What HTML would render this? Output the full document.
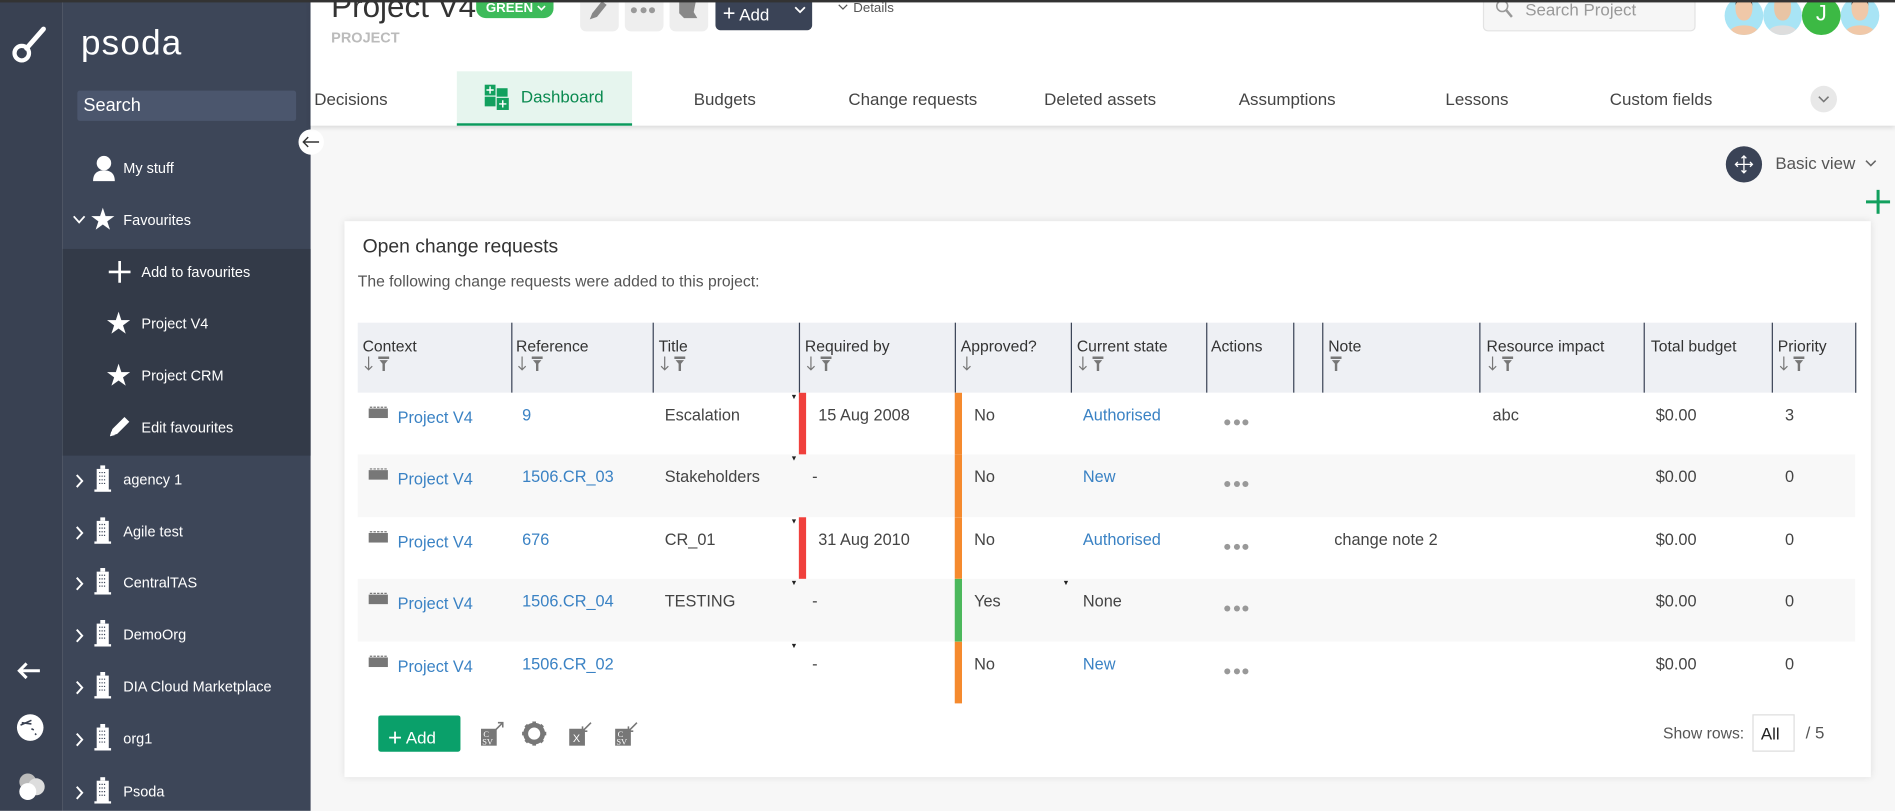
<!DOCTYPE html>
<html><head><meta charset="utf-8">
<style>
*{box-sizing:border-box;margin:0;padding:0}
html,body{width:1895px;height:810px;overflow:hidden;background:#f7f7f7;font-family:"Liberation Sans",sans-serif}
#w{position:absolute;left:0;top:0;width:1568px;height:671px;transform:scale(1.20855);transform-origin:0 0;background:#f7f7f7;overflow:hidden}
.a{position:absolute;white-space:nowrap}
.side{color:#fff;font-size:12px}
.tab{font-size:14px;color:#444;top:74px}
.th{font-size:13px;color:#333;top:279px}
.ar{top:294px;height:14px}
.td{font-size:13.5px;color:#444}
.bl{color:#3a82c4}
.vl{position:absolute;top:267px;height:58px;width:1px;background:#3a4356}
.dots{position:absolute;width:30px;height:5px;white-space:nowrap;line-height:0}
.dots i{display:inline-block;width:5px;height:5px;border-radius:50%;background:#999;margin-right:2.5px}
</style></head><body><div id="w">
<div class="a" style="left:0;top:0;width:1568px;height:2px;background:#333;z-index:5"></div>
<div class="a" style="left:0;top:0;width:52px;height:671px;background:#394152"></div>
<svg class="a" style="left:8px;top:20px" width="34" height="34" viewBox="0 0 34 34"><line x1="28" y1="4" x2="14" y2="20" stroke="#fff" stroke-width="4" stroke-linecap="round"/><circle cx="10" cy="24" r="6" fill="none" stroke="#fff" stroke-width="3.5"/></svg>
<svg class="a" style="left:14px;top:548px" width="20" height="14"><path d="M2 7H19M8 1L2 7l6 6" stroke="#fff" stroke-width="2.5" fill="none"/></svg>
<div class="a" style="left:14px;top:591px;width:22px;height:22px;border-radius:50%;background:#fff"></div>
<svg class="a" style="left:14px;top:591px" width="22" height="22"><path d="M3 9l9-4M4 7l8 1M12 12l2 1M15 16l1 1" stroke="#394152" stroke-width="1.3"/></svg>
<div class="a" style="left:16px;top:640px;width:14px;height:14px;border-radius:50%;background:#bbb"></div>
<div class="a" style="left:23px;top:644px;width:14px;height:14px;border-radius:50%;background:#ddd"></div>
<div class="a" style="left:16px;top:648px;width:14px;height:14px;border-radius:50%;background:#fff"></div>
<div class="a" style="left:52px;top:0;width:205px;height:671px;background:#3d4658"></div>
<div class="a" style="left:52px;top:206px;width:205px;height:171px;background:#333a48"></div>
<div class="a" style="left:67px;top:20px;font-size:29px;color:#fff;letter-spacing:1px;font-weight:300">psoda</div>
<div class="a" style="left:64px;top:75px;width:181px;height:25px;background:#4b566d;border-radius:2px;color:#fff;font-size:15px;padding:4px 5px">Search</div>
<div class="a" style="left:247px;top:107px;width:21px;height:21px;border-radius:50%;background:#fff"></div>
<svg class="a" style="left:250px;top:112px" width="15" height="11"><path d="M1 5.5H14M5 1.5L1 5.5l4 4" stroke="#333" stroke-width="1.2" fill="none"/></svg>
<svg class="a" style="left:76px;top:128px" width="20" height="22"><circle cx="10" cy="7" r="6" fill="#fff"/><path d="M1 22c0-7 4-9 9-9s9 2 9 9z" fill="#fff"/></svg>
<div class="a side" style="left:102px;top:132px">My stuff</div>
<svg class="a" style="left:60px;top:178px" width="11" height="8"><path d="M1 1l4.5 5L10 1" stroke="#fff" stroke-width="1.5" fill="none"/></svg>
<div class="a" style="left:74px;top:167px;color:#fff;font-size:25px">&#9733;</div>
<div class="a side" style="left:102px;top:175px">Favourites</div>
<svg class="a" style="left:89px;top:215px" width="20" height="20"><path d="M10 1v18M1 10h18" stroke="#fff" stroke-width="2.2"/></svg>
<div class="a side" style="left:117px;top:218px">Add to favourites</div>
<div class="a" style="left:87px;top:253px;color:#fff;font-size:25px">&#9733;</div>
<div class="a side" style="left:117px;top:261px">Project V4</div>
<div class="a" style="left:87px;top:296px;color:#fff;font-size:25px">&#9733;</div>
<div class="a side" style="left:117px;top:304px">Project CRM</div>
<svg class="a" style="left:88px;top:342px" width="22" height="22"><path d="M3 19l2-6L15 3l4 4L9 17z" fill="#fff"/><path d="M3 19l1-4 3 3z" fill="#fff"/></svg>
<div class="a side" style="left:117px;top:347px">Edit favourites</div>
<div id="orgs"></div>
<div class="a" style="left:257px;top:0;width:1311px;height:104px;background:#fff;box-shadow:0 2px 4px rgba(0,0,0,.12)"></div>
<div class="a" style="left:274px;top:-10px;font-size:26px;color:#333">Project V4</div>
<div class="a" style="left:394px;top:0;width:64px;height:15px;background:#3dbb5a;border-radius:0 0 8px 8px;color:#fff;font-size:11px;font-weight:bold;padding:1px 0 0 8px">GREEN</div>
<svg class="a" style="left:444px;top:4px" width="8" height="6"><path d="M1 1l3 3 3-3" stroke="#fff" stroke-width="1.4" fill="none"/></svg>
<div class="a" style="left:274px;top:24px;font-size:12px;font-weight:bold;color:#bbb">PROJECT</div>
<div class="a" style="left:480px;top:0;width:32px;height:26px;background:#eee;border-radius:0 0 5px 5px"></div>
<svg class="a" style="left:486px;top:0" width="20" height="18"><path d="M2 16l2-5 8-10 4 3-8 10z" fill="#888"/></svg>
<div class="a" style="left:517px;top:0;width:32px;height:26px;background:#eee;border-radius:0 0 5px 5px"></div>
<div class="dots" style="left:522px;top:6px"><i></i><i></i><i></i></div>
<div class="a" style="left:554px;top:0;width:32px;height:26px;background:#eee;border-radius:0 0 5px 5px"></div>
<svg class="a" style="left:560px;top:0" width="20" height="20"><path d="M2 0h14l-2 10 3 5H6l-4-4z" fill="#888"/></svg>
<div class="a" style="left:592px;top:0;width:80px;height:25px;background:#3a4356;border-radius:0 0 4px 4px;color:#fff;font-size:14px;padding:1px 0 0 6px"><b style="font-size:18px;font-weight:normal">+</b> Add</div>
<svg class="a" style="left:657px;top:5px" width="10" height="7"><path d="M1 1l4 4 4-4" stroke="#fff" stroke-width="1.5" fill="none"/></svg>
<svg class="a" style="left:693px;top:3px" width="9" height="6"><path d="M1 1l3.5 3.5L8 1" stroke="#555" stroke-width="1" fill="none"/></svg>
<div class="a" style="left:706px;top:1px;font-size:11px;color:#555">Details</div>
<div class="a" style="left:1227px;top:-2px;width:176px;height:28px;background:#f6f6f6;border:1px solid #e3e3e3;border-radius:4px;font-size:14px;color:#999;padding:1px 0 0 34px">Search Project</div>
<svg class="a" style="left:1237px;top:0" width="16" height="16"><circle cx="6" cy="5" r="4.5" stroke="#999" fill="none" stroke-width="1.3"/><path d="M9 8l5 6" stroke="#999" stroke-width="2"/></svg>
<div id="av"></div>
<div class="a tab" style="left:260px">Decisions</div>
<div class="a" style="left:378px;top:59px;width:145px;height:45px;background:#e6f5ee;border-bottom:2px solid #0a9a5c"></div>
<svg class="a" style="left:401px;top:70px" width="22" height="22"><rect x="0" y="0" width="9" height="9" fill="#12a05e"/><rect x="10" y="3" width="9" height="7" fill="#12a05e"/><rect x="0" y="10" width="9" height="8" fill="#12a05e"/><rect x="10" y="11" width="10" height="10" fill="#12a05e"/><path d="M4.5 1.5v6M1.5 4.5h6M15 13v6M12 16h6" stroke="#fff" stroke-width="1.2"/></svg>
<div class="a tab" style="left:431px;color:#0a8a50;top:72px">Dashboard</div>
<div class="a tab" style="left:574px">Budgets</div>
<div class="a tab" style="left:702px">Change requests</div>
<div class="a tab" style="left:864px">Deleted assets</div>
<div class="a tab" style="left:1025px">Assumptions</div>
<div class="a tab" style="left:1196px">Lessons</div>
<div class="a tab" style="left:1332px">Custom fields</div>
<div class="a" style="left:1498px;top:71px;width:22px;height:22px;border-radius:50%;background:#e8e8e8"></div>
<svg class="a" style="left:1504px;top:79px" width="10" height="7"><path d="M1 1l4 4 4-4" stroke="#777" stroke-width="1.3" fill="none"/></svg>
<div class="a" style="left:1428px;top:121px;width:30px;height:30px;border-radius:50%;background:#3a4356"></div>
<svg class="a" style="left:1435px;top:128px" width="16" height="16"><path d="M8 1v14M1 8h14M6 3l2-2 2 2M6 13l2 2 2-2M3 6L1 8l2 2M13 6l2 2-2 2" stroke="#fff" stroke-width="1.1" fill="none"/></svg>
<div class="a" style="left:1469px;top:127px;font-size:14px;color:#555">Basic view</div>
<svg class="a" style="left:1543px;top:132px" width="10" height="7"><path d="M1 1l4 4 4-4" stroke="#666" stroke-width="1.3" fill="none"/></svg>
<svg class="a" style="left:1544px;top:157px" width="20" height="20"><path d="M10 0v20M0 10h20" stroke="#12a05e" stroke-width="2.5"/></svg>
<div class="a" style="left:285px;top:183px;width:1263px;height:460px;background:#fff;box-shadow:0 0 6px rgba(0,0,0,.1)"></div>
<div class="a" style="left:300px;top:196px;font-size:16px;color:#333">Open change requests</div>
<div class="a" style="left:296px;top:225px;font-size:13px;color:#555">The following change requests were added to this project:</div>
<div class="a" style="left:296px;top:267px;width:1239px;height:58px;background:#eef0f4"></div>
<div id="tbl"></div>
<div class="a" style="left:313px;top:592px;width:68px;height:30px;background:#0aa06a;border-radius:2px;color:#fff;font-size:14px;padding:6px 0 0 8px"><b style="font-size:20px;font-weight:normal;position:relative;top:2px">+</b> Add</div>
<svg class="a" style="left:397px;top:596px" width="22" height="22"><rect x="1" y="7" width="13" height="14" fill="#777"/><text x="3" y="14" font-size="7" fill="#fff" font-family="Liberation Serif">C</text><text x="2" y="20" font-size="7" fill="#fff" font-family="Liberation Serif">SV</text><path d="M12 9l7-7M15 2h4v4" stroke="#777" stroke-width="1.3" fill="none"/></svg>
<svg class="a" style="left:431px;top:596px" width="22" height="22"><circle cx="11" cy="11" r="7" fill="none" stroke="#777" stroke-width="4"/><path d="M11 1v4M11 17v4M1 11h4M17 11h4M4 4l3 3M15 15l3 3M4 18l3-3M15 7l3-3" stroke="#777" stroke-width="3"/></svg>
<svg class="a" style="left:470px;top:596px" width="22" height="22"><rect x="1" y="7" width="13" height="14" fill="#777"/><text x="4" y="18" font-size="9" fill="#fff">X</text><path d="M19 2l-7 7M12 5v4h4" stroke="#777" stroke-width="1.3" fill="none"/></svg>
<svg class="a" style="left:508px;top:596px" width="22" height="22"><rect x="1" y="7" width="13" height="14" fill="#777"/><text x="3" y="14" font-size="7" fill="#fff" font-family="Liberation Serif">C</text><text x="2" y="20" font-size="7" fill="#fff" font-family="Liberation Serif">SV</text><path d="M19 2l-7 7M12 5v4h4" stroke="#777" stroke-width="1.3" fill="none"/></svg>
<div class="a" style="left:1376px;top:599px;font-size:13px;color:#555">Show rows:</div>
<div class="a" style="left:1450px;top:591px;width:35px;height:31px;border:1px solid #ddd;font-size:14px;color:#222;padding:7px 0 0 6px">All</div>
<div class="a" style="left:1494px;top:598px;font-size:14px;color:#555">/ 5</div>
<script>
var av='';
[[1427,0],[1459,1],[1491,2],[1523,0]].forEach(function(a){
if(a[1]==2){av+='<div class="a" style="left:'+a[0]+'px;top:-3px;width:32px;height:32px;border-radius:50%;background:#3cb944;color:#fff;font-size:18px;text-align:center;line-height:28px">J</div>';return;}
av+='<div class="a" style="left:'+a[0]+'px;top:-3px;width:32px;height:32px;border-radius:50%;background:#a8e4f5;overflow:hidden"><div style="position:absolute;left:9px;top:-2px;width:14px;height:22px;border-radius:45%;background:'+(a[1]?'#e8c4a4':'#f0c8a8')+';'+(a[1]?'':'border-top:5px solid #222;')+'"></div><div style="position:absolute;left:4px;top:24px;width:24px;height:12px;border-radius:50%;background:'+(a[1]?'#ddd':'#f0c8a8')+'"></div></div>';});
document.getElementById('av').innerHTML=av;
var o=document.getElementById('orgs'),h='';
[['agency 1',397],['Agile test',440],['CentralTAS',482],['DemoOrg',525],['DIA Cloud Marketplace',568],['org1',611],['Psoda',655]].forEach(function(r){
h+='<svg class="a" style="left:62px;top:'+(r[1]-5)+'px" width="8" height="12"><path d="M1.5 1l4.5 5-4.5 5" stroke="#fff" stroke-width="1.6" fill="none"/></svg>';
h+='<svg class="a" style="left:78px;top:'+(r[1]-12)+'px" width="14" height="22"><rect x="5" y="0" width="4" height="3" fill="#fff"/><rect x="2" y="3" width="10" height="18" fill="#fff"/><path d="M4 6h6M4 9h6M4 12h6M4 15h6" stroke="#3d4658" stroke-width="1" stroke-dasharray="1 1"/><rect x="0" y="20" width="14" height="2" fill="#fff"/></svg>';
h+='<div class="a side" style="left:102px;top:'+(r[1]-7)+'px">'+r[0]+'</div>';});
o.innerHTML=h;
var t='',cols=[296,423,540,661,790,886,998,1070,1094,1224,1360,1466,1535];
var arr='<path d="M3 0v11M0 8l3 3 3-3" stroke="#777" stroke-width="1" fill="none"/>';
var fun='<path d="M0 0h9v2H0zM1 3h7L5.5 6v6h-2V6z" fill="#777"/>';
cols.slice(1).forEach(function(x){t+='<div class="vl" style="left:'+x+'px"></div>'});
[['Context',300,1,1],['Reference',427,1,1],['Title',545,1,1],['Required by',666,1,1],['Approved?',795,1,0],['Current state',891,1,1],['Actions',1002,0,0],['Note',1099,0,1],['Resource impact',1230,1,1],['Total budget',1366,0,0],['Priority',1471,1,1]].forEach(function(c){
t+='<div class="a th" style="left:'+c[1]+'px">'+c[0]+'</div>';
var s='<svg class="a ar" style="left:'+(c[1]+1)+'px" width="30" height="14">'+(c[2]?'<g transform="translate(1,1)">'+arr+'</g>':'')+(c[3]?'<g transform="translate('+(c[2]?12:1)+',1)">'+fun+'</g>':'')+'</svg>';
t+=s;});
var rows=[['9','Escalation','15 Aug 2008','No','Authorised',1,'','abc','3','#f0403c','#f58a2e'],
['1506.CR_03','Stakeholders','-','No','New',1,'','','0','','#f58a2e'],
['676','CR_01','31 Aug 2010','No','Authorised',1,'change note 2','','0','#f0403c','#f58a2e'],
['1506.CR_04','TESTING','-','Yes','None',0,'','','0','','#4cb85c'],
['1506.CR_02','','-','No','New',1,'','','0','','#f58a2e']];
rows.forEach(function(r,i){var y=325+i*51.4;
t+='<div class="a" style="left:296px;top:'+y+'px;width:1239px;height:51.4px;background:'+(i%2?'#f8f8f8':'#fff')+'"></div>';
if(r[9])t+='<div class="a" style="left:661px;top:'+y+'px;width:6px;height:51.4px;background:'+r[9]+'"></div>';
t+='<div class="a" style="left:790px;top:'+y+'px;width:6px;height:51.4px;background:'+r[10]+'"></div>';
t+='<div class="a" style="left:654px;top:'+(y+1)+'px;font-size:6px;color:#222">&#9660;</div>';
if(i==3)t+='<div class="a" style="left:879px;top:'+(y+1)+'px;font-size:6px;color:#222">&#9660;</div>';
t+='<svg class="a" style="left:305px;top:'+(y+11)+'px" width="16" height="10"><rect x="0" y="2" width="16" height="8" fill="#777"/><path d="M1 1h14" stroke="#777" stroke-dasharray="2 1"/></svg>';
var ty=y+11;
t+='<div class="a td bl" style="left:329px;top:'+(ty+2)+'px">Project V4</div>';
t+='<div class="a td bl" style="left:432px;top:'+ty+'px">'+r[0]+'</div>';
t+='<div class="a td" style="left:550px;top:'+ty+'px">'+r[1]+'</div>';
t+='<div class="a td" style="left:'+(r[2]=='-'?672:677)+'px;top:'+ty+'px">'+r[2]+'</div>';
t+='<div class="a td" style="left:806px;top:'+ty+'px">'+r[3]+'</div>';
t+='<div class="a td'+(r[5]?' bl':'')+'" style="left:896px;top:'+ty+'px">'+r[4]+'</div>';
t+='<div class="dots" style="left:1013px;top:'+(y+22)+'px"><i></i><i></i><i></i></div>';
t+='<div class="a td" style="left:1104px;top:'+ty+'px">'+r[6]+'</div>';
t+='<div class="a td" style="left:1235px;top:'+ty+'px">'+r[7]+'</div>';
t+='<div class="a td" style="left:1370px;top:'+ty+'px">$0.00</div>';
t+='<div class="a td" style="left:1477px;top:'+ty+'px">'+r[8]+'</div>';});
document.getElementById('tbl').innerHTML=t;
</script>
</div></body></html>
